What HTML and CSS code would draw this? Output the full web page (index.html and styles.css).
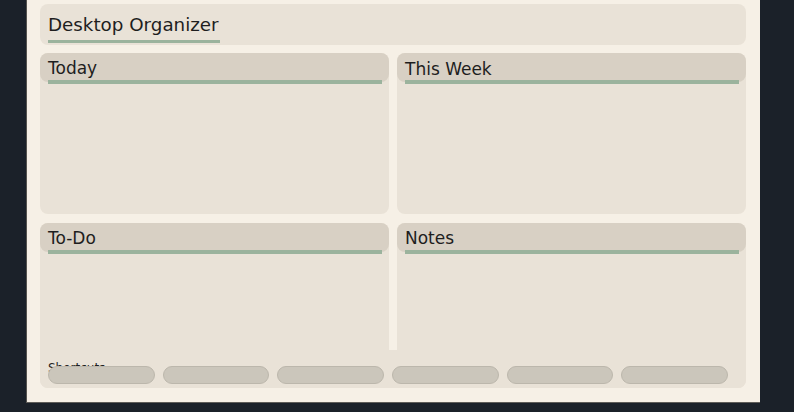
FILE: index.html
```html
<!DOCTYPE html>
<html lang="en">
<head>
<meta charset="utf-8">
<title>Desktop Organizer</title>
<link rel="stylesheet" href="styles.css">
</head>
<body>
<div class="app">
  <header class="app-header">
    <h1 class="app-title">Desktop Organizer</h1>
  </header>
  <main class="grid">
    <section class="card">
      <div class="card-head"><h2 class="card-title">Today</h2></div>
    </section>
    <section class="card">
      <div class="card-head"><h2 class="card-title card-title--low">This Week</h2></div>
    </section>
    <section class="card">
      <div class="card-head"><h2 class="card-title">To-Do</h2></div>
    </section>
    <section class="card">
      <div class="card-head"><h2 class="card-title">Notes</h2></div>
    </section>
  </main>
  <footer class="shortcuts">
    <div class="shortcuts-label">Shortcuts</div>
    <div class="shortcut-row">
      <button class="shortcut"></button>
      <button class="shortcut"></button>
      <button class="shortcut"></button>
      <button class="shortcut"></button>
      <button class="shortcut"></button>
      <button class="shortcut"></button>
    </div>
  </footer>
</div>
</body>
</html>
```
FILE: styles.css
```css
* { box-sizing: border-box; }
html, body {
  margin: 0;
  height: 412px;
  overflow: hidden;
  background: #1b2129;
  font-family: "DejaVu Sans", Verdana, sans-serif;
  color: #1e1e1e;
}
.app {
  margin-left: 26px;
  width: 734px;
  height: 403px;
  background: #f6f0e6;
  border-left: 1px solid #55534f;
  border-bottom: 1px solid #5e5c58;
  padding: 4px 14px 0 13px;
}
.app-header {
  background: #e9e2d7;
  border-radius: 8px;
  height: 41px;
  padding: 10px 8px 0;
}
.app-title {
  display: inline-block;
  margin: 0;
  font-size: 18.3px;
  font-weight: normal;
  line-height: 22px;
  padding: 0 1px 4px 0;
  border-bottom: 3px solid #9bb39d;
}
.grid {
  display: grid;
  grid-template-columns: 1fr 1fr;
  grid-template-rows: 161px 165px;
  column-gap: 8px;
  row-gap: 9px;
  margin-top: 8px;
}
.card {
  background: #e9e2d7;
  border-radius: 8px;
}
.card-head {
  background: #d8d0c4;
  border-radius: 8px;
  height: 29px;
  padding: 5px 7px 0 8px;
}
.card-title {
  margin: 0;
  font-size: 17px;
  font-weight: normal;
  line-height: 20px;
  padding-bottom: 2px;
  border-bottom: 4px solid #9bb39d;
}
.card-title--low {
  padding-top: 2px;
  line-height: 19px;
  padding-bottom: 1px;
}
.shortcuts {
  margin-top: -38px;
  height: 38px;
  background: #e9e2d7;
  border-radius: 0 0 8px 8px;
  padding: 11px 18px 0 8px;
}
.shortcuts-label {
  font-size: 12px;
  line-height: 15px;
  height: 5px;
  color: #1e1e1e;
}
.shortcut-row {
  display: grid;
  grid-template-columns: repeat(6, 1fr);
  column-gap: 8px;
}
.shortcut {
  height: 18px;
  margin: 0;
  padding: 0;
  background: #cbc6bb;
  border: 1px solid #bcb7ac;
  border-radius: 9px;
}
```
